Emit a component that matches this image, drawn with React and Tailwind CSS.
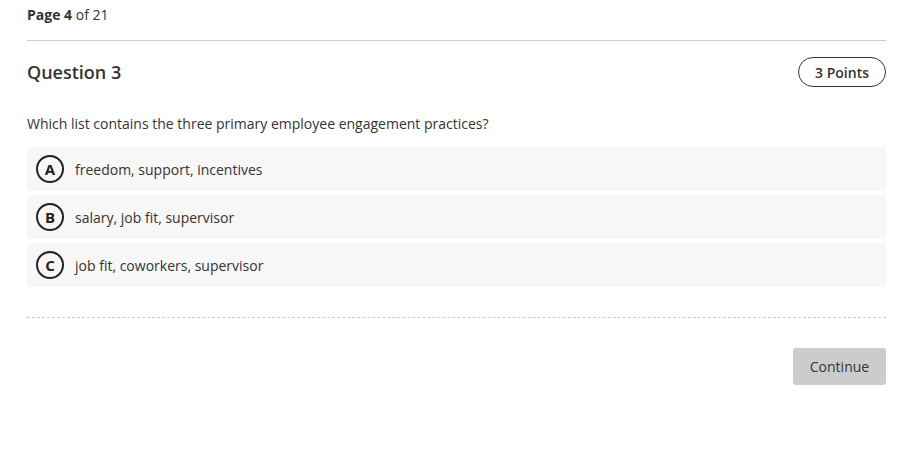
import React from 'react';

const options = [
  { letter: 'A', text: 'freedom, support, incentives' },
  { letter: 'B', text: 'salary, job fit, supervisor' },
  { letter: 'C', text: 'job fit, coworkers, supervisor' },
];

export default function App() {
  return (
    <div
      className="w-[910px] h-[464px] bg-white text-[#333] pl-[27px] pr-[24px] pt-[5px]"
      style={{ fontFamily: '"Open Sans", sans-serif' }}
    >
      {/* Page counter */}
      <div className="text-[14px] leading-[20px] text-[#333]">
        <span className="font-bold">Page 4</span> of 21
      </div>
      <div className="mt-[15px] border-t border-[#cccccc]" />

      {/* Question header */}
      <div className="mt-[16px] flex items-center justify-between">
        <h2 className="text-[18px] leading-[30px] font-semibold text-[#333]">Question 3</h2>
        <div className="h-[30px] px-[16px] flex items-center rounded-full border border-[#333] text-[14px] font-semibold">
          3 Points
        </div>
      </div>

      <p className="mt-[27px] text-[14px] leading-[20px]">
        Which list contains the three primary employee engagement practices?
      </p>

      {/* Options */}
      <div className="mt-[13px] flex flex-col gap-[4px]">
        {options.map(o => (
          <div key={o.letter} className="h-[44px] flex items-center bg-[#f7f7f7] rounded-[3px] pl-[9px]">
            <div className="shrink-0 w-[28px] h-[28px] rounded-full border-2 border-[#222] flex items-center justify-center text-[15px] font-bold text-[#222]">
              {o.letter}
            </div>
            <span className="ml-[11px] text-[14px] text-[#333]">{o.text}</span>
          </div>
        ))}
      </div>

      <div className="mt-[30px] border-t border-dashed border-[#cccccc]" />

      <div className="mt-[30px] flex justify-end">
        <button className="w-[93px] h-[37px] bg-[#cccccc] rounded-[3px] text-[14px] text-[#333]">
          Continue
        </button>
      </div>
    </div>
  );
}
